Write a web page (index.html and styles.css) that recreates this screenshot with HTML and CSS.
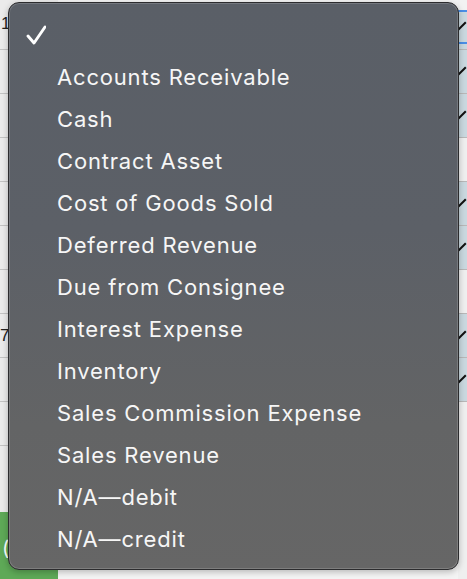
FILE: index.html
```html
<!DOCTYPE html>
<html>
<head>
<meta charset="utf-8">
<link rel="stylesheet" href="styles.css">
</head>
<body>
<div class="sheet">
  <div class="col left">
    <div class="cell first"><span class="num">1</span></div>
    <div class="cell"></div>
    <div class="cell"></div>
    <div class="cell"></div>
    <div class="cell"></div>
    <div class="cell"></div>
    <div class="cell"></div>
    <div class="cell"><span class="num seven">7</span></div>
    <div class="cell"></div>
    <div class="cell"></div>
    <div class="cell tall"></div>
    <div class="green"><span class="paren">(</span></div>
  </div>
  <div class="col mid"></div>
  <div class="col right">
    <div class="rcell head"><i class="stroke"></i></div>
    <div class="rcell blue"><i class="stroke"></i></div>
    <div class="rcell blue"><i class="stroke"></i></div>
    <div class="rcell white"></div>
    <div class="rcell blue"><i class="stroke"></i></div>
    <div class="rcell blue"><i class="stroke"></i></div>
    <div class="rcell white"></div>
    <div class="rcell blue"><i class="stroke"></i></div>
    <div class="rcell blue"><i class="stroke"></i></div>
    <div class="rcell white rest"></div>
  </div>
</div>

<div class="menu">
  <div class="item checked">
    <svg class="check" width="20" height="20" viewBox="0 0 20 20"><path d="M2 11 L8 18 L19 2" fill="none" stroke="#fff" stroke-width="2.9" stroke-linecap="round" stroke-linejoin="round"/></svg>
  </div>
  <div class="item">Accounts Receivable</div>
  <div class="item">Cash</div>
  <div class="item">Contract Asset</div>
  <div class="item">Cost of Goods Sold</div>
  <div class="item">Deferred Revenue</div>
  <div class="item">Due from Consignee</div>
  <div class="item">Interest Expense</div>
  <div class="item">Inventory</div>
  <div class="item">Sales Commission Expense</div>
  <div class="item">Sales Revenue</div>
  <div class="item">N/A—debit</div>
  <div class="item">N/A—credit</div>
</div>
</body>
</html>
```

FILE: styles.css
```css
html, body {
  margin: 0;
  padding: 0;
  width: 467px;
  height: 579px;
  overflow: hidden;
  background: #ececec;
  font-family: Inter, "Liberation Sans", sans-serif;
}

.sheet {
  display: flex;
  width: 467px;
  height: 579px;
}

.col.left {
  width: 58px;
  display: flex;
  flex-direction: column;
  background: #ebebeb;
}

.cell {
  height: 43px;
  border-bottom: 1px solid #c3c3c3;
  box-sizing: content-box;
  position: relative;
}
.cell.first { height: 49px; }
.cell.tall { height: 66px; border-bottom: none; }

.num {
  font-family: "Liberation Sans", sans-serif;
  font-size: 17px;
  color: #222;
  position: absolute;
  left: 1px;
  top: 14px;
}
.num.seven { left: 0; top: 12px; }

.green {
  flex: 1;
  background: #5ea957;
  position: relative;
}
.paren {
  position: absolute;
  left: 2px;
  top: 24px;
  color: #fff;
  font-size: 20px;
}

.col.mid { flex: 1; background: #f4f4f4; }

.col.right {
  width: 9px;
  display: flex;
  flex-direction: column;
}

.rcell {
  height: 43px;
  border-bottom: 1px solid #b8b8b8;
  position: relative;
  background: #c9d8df;
}
.rcell.head {
  border-top: 10px solid #f2f2f2;
  box-sizing: border-box;
  height: 50px;
  background: #c9d8df;
  box-shadow: inset 0 2px 0 #4a8ee6;
}
.rcell.head::after {
  content: "";
  position: absolute;
  left: 0; right: 0;
  top: 32px;
  height: 2px;
  background: #4a8ee6;
}
.rcell.white { background: #efefef; }
.rcell.rest { flex: 1; border-bottom: none; }

.stroke {
  position: absolute;
  left: 0;
  top: 24px;
  width: 11px;
  height: 2px;
  background: #111;
  transform: rotate(-45deg);
  transform-origin: left center;
}
.rcell.head .stroke { top: 19px; }

.menu {
  position: absolute;
  left: 8px;
  top: 2px;
  width: 451px;
  height: 568px;
  box-sizing: border-box;
  border: 1px solid #2c2c2e;
  border-radius: 11px;
  background: linear-gradient(180deg, #5a5f67 0%, #5c6067 40%, #636465 75%, #666666 100%);
  box-shadow: inset 0 0 0 1px rgba(255,255,255,0.16), 0 2px 6px rgba(0,0,0,0.25);
  padding: 11px 0 0 48px;
}

.item {
  height: 42px;
  line-height: 42px;
  color: #f6f6f6;
  font-size: 22px;
  letter-spacing: 0.82px;
  white-space: nowrap;
  position: relative;
}

.check {
  position: absolute;
  left: -31px;
  top: 11px;
}
```
